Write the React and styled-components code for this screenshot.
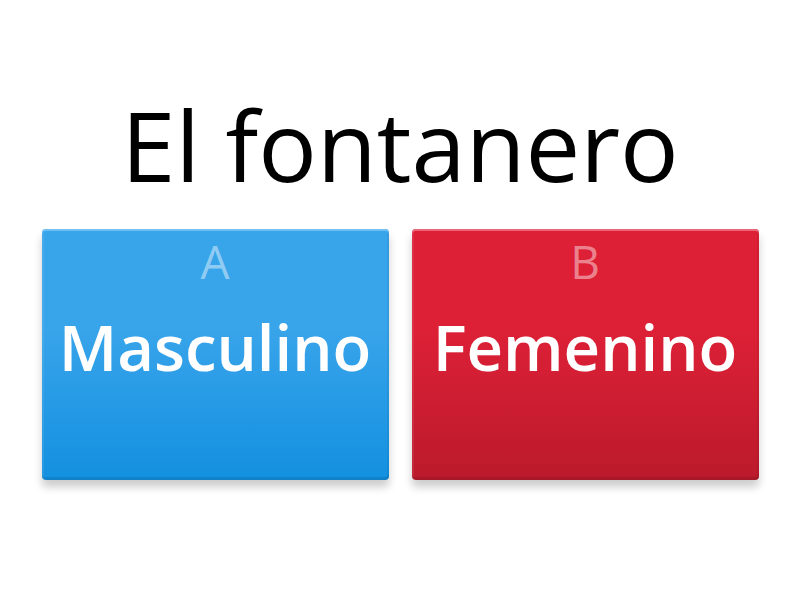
import styled, { createGlobalStyle } from 'styled-components';

const GlobalStyle = createGlobalStyle`
  html, body {
    margin: 0;
    padding: 0;
    background: #ffffff;
    font-family: "Open Sans", "Noto Sans", sans-serif;
  }
`;

const options = [
  { letter: 'A', label: 'Masculino', top: '#38a4ea', bottom: '#1390e0', edge: 'rgba(120, 195, 245, 0.9)' },
  { letter: 'B', label: 'Femenino', top: '#dd2036', bottom: '#bb1a2c', edge: 'rgba(235, 110, 125, 0.9)' },
];

const App = () => {
  return (
    <Page>
      <GlobalStyle />
      <Question>El fontanero</Question>
      <Answers>
        {options.map((o) => (
          <Card key={o.letter} $top={o.top} $bottom={o.bottom} $edge={o.edge}>
            <Letter>{o.letter}</Letter>
            <Label>{o.label}</Label>
          </Card>
        ))}
      </Answers>
    </Page>
  );
};

export default App;

const Page = styled.div`
  width: 800px;
  height: 600px;
  display: flex;
  flex-direction: column;
  align-items: center;
  padding-top: 77px;
  box-sizing: border-box;
`;

const Question = styled.h1`
  margin: 0;
  font-size: 97.5px;
  font-weight: 400;
  color: #000;
  line-height: 136px;
`;

const Answers = styled.div`
  display: flex;
  gap: 23px;
  margin-top: 16px;
`;

const Card = styled.div`
  width: 347px;
  height: 251px;
  border-radius: 4px;
  display: flex;
  flex-direction: column;
  align-items: center;
  background: linear-gradient(to bottom, ${p => p.$top} 0%, ${p => p.$top} 40%, ${p => p.$bottom} 100%);
  box-shadow:
    inset 0 2px 0 ${p => p.$edge},
    inset 2px 0 0 rgba(255, 255, 255, 0.08),
    inset -2px 0 0 rgba(0, 0, 0, 0.05),
    inset 0 -3px 0 rgba(0, 0, 0, 0.1),
    0 7px 9px rgba(0, 0, 0, 0.2);
  color: #fff;
`;

const Letter = styled.div`
  margin-top: 1px;
  font-size: 46px;
  line-height: 62px;
  font-weight: 400;
  color: rgba(255, 255, 255, 0.45);
`;

const Label = styled.div`
  margin-top: 11px;
  font-size: 63.5px;
  line-height: 88px;
  font-weight: 600;
  color: #fff;
`;
